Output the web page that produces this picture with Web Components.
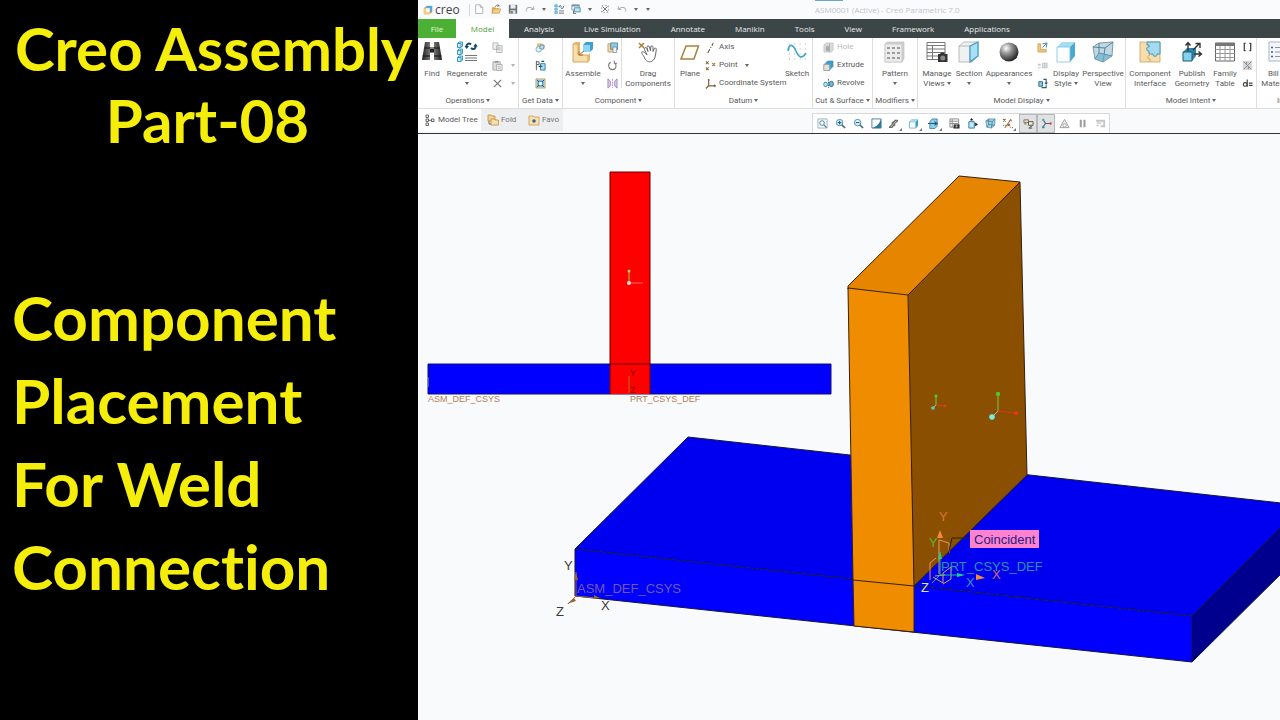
<!DOCTYPE html>
<html lang="en">
<head>
<meta charset="utf-8">
<title>Creo Assembly Part-08</title>
<style>
  html, body { margin: 0; height: 100%; }
  body { background: #000; font-family: "Open Sans", "Noto Sans", sans-serif; }
</style>
</head>
<body>
<lesson-page>
  <lesson-panel slot="panel">
    <span slot="title">Creo Assembly</span>
    <span slot="part">Part-08</span>
    <span slot="topic">Component Placement<br>For Weld Connection</span>
  </lesson-panel>
  <creo-window slot="window"></creo-window>
</lesson-page>

<script>
const define = (name, html, setup) => {
  const template = document.createElement('template');
  template.innerHTML = html;
  customElements.define(name, class extends HTMLElement {
    connectedCallback() {
      if (this.shadowRoot) return;
      const root = this.attachShadow({ mode: 'open' });
      root.append(template.content.cloneNode(true));
      if (setup) setup(this, root);
    }
  });
};

const makeIcon = (name, big) => {
  const icon = document.createElement('ui-icon');
  icon.setAttribute('name', name);
  if (big) icon.setAttribute('big', '');
  return icon;
};

/* Icons: [viewBox size, markup] */
const ICONS = {
  logo: [12, '<path d="M1 3.500L4 1.500 11 1.500 11 8.500 8 11 1 11z" fill="#e3a04c"/><path d="M4 1h7v7.500H4z" fill="#5aa7cf"/><path d="M1 4h7v7H1z" fill="#f3cd8d"/><path d="M4 4h4v4.500H4z" fill="#fff"/>'],
  new: [12, '<path d="M2 1h5.500L10.500 4v7.500H2z" fill="#fff" stroke="#a2a7ab"/><path d="M7.500 1v3h3" fill="none" stroke="#a2a7ab"/>'],
  open: [12, '<path d="M1 4h4l1 1h4v6H1z" fill="#e1ac55"/><path d="M1 11l2-5h9l-2 5z" fill="#f2cf8c" stroke="#bb8530" stroke-width=".6"/><path d="M5 3.500C6 1 8 1 9.500 2M8 .500l2 1.700-2.500.800" fill="none" stroke="#555" stroke-width=".8"/>'],
  save: [12, '<path d="M1 1h10v10.500H1z" fill="#6b7379"/><path d="M3 1h6v4.500H3z" fill="#e9edf0"/><path d="M3 7.500h6v4H3z" fill="#dfe3e6"/><path d="M4 8.500h1.500v3H4z" fill="#555"/>'],
  redo: [12, '<path d="M2 9C0 4 6 2.500 10 6M10.500 3v3.500H7" fill="none" stroke="#9a9ea1" stroke-width="1.100"/>'],
  undo: [12, '<path d="M10 9C12 4 6 2.500 2 6M1.500 3v3.500H5" fill="none" stroke="#9a9ea1" stroke-width="1.100"/>'],
  tree2: [12, '<path d="M1 1h3v2.500H1zM1 5h3v2.500H1zM1 9h3v2.500H1z" fill="#9ad7ee" stroke="#3793b8" stroke-width=".7"/><path d="M6 8h6M6 9.700h6M6 11.400h6" stroke="#777" stroke-width=".8"/><path d="M6 4C6 2 8 1.500 9 3M11.500 3C11.500 5 9.500 6 8 4.500" fill="none" stroke="#1c5479" stroke-width="1.200"/>'],
  windows: [12, '<path d="M1 1h9v6H1z" fill="#fff" stroke="#7b929f"/><path d="M1 1h9v2H1z" fill="#7b929f"/><path d="M4 4.500h7v5H4z" fill="#bfe4f2" stroke="#3f88a8"/><path d="M3 8v3.500h3" fill="none" stroke="#555"/>'],
  close: [12, '<path d="M2 2h8v8H2z" fill="none" stroke="#999" stroke-dasharray="2 2"/><path d="M3 3l6 6M9 3L3 9" stroke="#777" stroke-width="1.200"/>'],
  find: [22, '<defs><linearGradient id="b"><stop stop-color="#222"/><stop offset=".5" stop-color="#8b8b8b"/><stop offset="1" stop-color="#1d1d1d"/></linearGradient></defs><path d="M4 1h5v5h4V1h5l1 6 2 12h-8v-7H9v7H1L3 7z" fill="url(#b)"/><path d="M3.500 7h5.500M13 7h5.500M1.500 15H9M13 15h7.500" stroke="#111"/><path d="M9 8h4v3H9z" fill="#222"/>'],
  regen: [22, '<g fill="#c9ebf7" stroke="#3899bd"><path d="M1.500 2.500l1.500-1.500h3.500v4l-1.500 1.500H1.500zM1.500 9.500l1.500-1.500h3.500v4l-1.500 1.500H1.500zM1.500 16.500l1.500-1.500h3.500v4l-1.500 1.500H1.500z"/><path d="M1.500 2.500h3.500v4M1.500 9.500h3.500v4M1.500 16.500h3.500v4" fill="none"/></g><path d="M9 14.500h12M9 17h12M9 19.500h12" stroke="#777"/><path d="M10.500 6C10 3 13 1.500 15 3.500M19.500 4.500C20 8 17 9 15 7" fill="none" stroke="#12486d" stroke-width="2"/><path d="M8.500 5h4.500l-2.300 3zM17.300 5.500l2.200-3 2.300 3z" fill="#12486d"/>'],
  copy: [12, '<path d="M1 1h5.500v7H1zM5 4h6v7.500H5z" fill="#eee" stroke="#b3b5b7"/><path d="M6.500 6.500h3M6.500 8.500h3" stroke="#b3b5b7"/>'],
  paste: [12, '<path d="M1 2h8v9H1z" fill="#ddd" stroke="#aaa"/><path d="M3 1h4v2H3z" fill="#999"/><path d="M5 5h6v6.500H5z" fill="#f5f5f5" stroke="#aaa"/><path d="M6.500 7.500h3M6.500 9.500h3" stroke="#aaa"/>'],
  cross: [12, '<path d="M2 2l8 8M10 2l-8 8" stroke="#777" stroke-width="1.300"/>'],
  shapes: [12, '<path d="M2 1.500h6l2.500 2v4H2z" fill="#e9bb72"/><circle cx="4" cy="8" r="3" fill="#dff1f8" stroke="#6797ad" stroke-width=".8"/><path d="M6 3l4 1-1 4-4-1z" fill="#b9dff0" stroke="#4b8aa6" stroke-width=".8"/>'],
  merge: [12, '<path d="M1.500 1v10M1.500 2h3v3h-3" fill="none" stroke="#555"/><path d="M6 4h5v7H6z" fill="#a9ddf2" stroke="#2a7fa5"/><path d="M4 7h4M7 1.500h3" stroke="#174c68" stroke-width="1.300"/>'],
  shrink: [12, '<path d="M1 1h10v10H1z" fill="#a7dcef" stroke="#cfa65b"/><path d="M3.500 3.500h5v5h-5z" fill="#fff" stroke="#1f6c90"/><path d="M2 2l2.500 2.500M10 2L7.500 4.500M2 10l2.500-2.500M10 10L7.500 7.500" stroke="#164e6e"/>'],
  assemble: [22, '<path d="M1 3h5v11h10v7H1z" fill="#f9dfae" stroke="#c69345" stroke-width=".8"/><path d="M1 3l2-2h5l-2 2zM6 3l2-2v11l-2 2zM16 14l2-2v7l-2 2z" fill="#e2b66c"/><path d="M11 4l3-3h7v7l-3 3h-7z" fill="#3aa0ce"/><path d="M11 4h7v7h-7z" fill="#8fd5f0"/><path d="M7 14l5-4M7 10.500V14h4" fill="none" stroke="#a76f22"/>'],
  create: [12, '<path d="M1 2h8v9H1z" fill="#f1d39b" stroke="#b88a3f" stroke-width=".7"/><path d="M4 1h7.500v7H4z" fill="#8fc9e3" stroke="#377d9f" stroke-width=".8"/><path d="M6.500 5.500h4v6h-4z" fill="#eef2f4" stroke="#777" stroke-width=".7"/>'],
  cycle: [12, '<path d="M4 2.500C0 5 2 10.500 6 10.500S11 5.500 8.500 3.500M8 .500v3h3" fill="none" stroke="#777" stroke-width="1.100"/>'],
  mirror: [12, '<path d="M1 1c4 2 4 8 0 10zM11 1c-4 2-4 8 0 10z" fill="#d8cbe8" stroke="#9673b0" stroke-width=".8"/><path d="M6 1v10" stroke="#9673b0" stroke-width=".8" stroke-dasharray="2 1"/>'],
  drag: [22, '<path d="M2 2l5 5M7 2L2 7" stroke="#a77a2e" stroke-width="1.400"/><path d="M5 11c1.500-1 3.500 1 5 3L7.500 8.500c-.700-2 1.500-2.500 2.200-1L11 10.500 10 6.500c-.300-2 2-2.300 2.500-.5L13.500 10l.200-4c.3-1.700 2.300-1.500 2.300.2L16 10.500l1.200-2.800c.8-1.300 2.500-.5 2.100 1L18.500 14c-.5 3.500-1.500 5-4 6.500-3 1-5.500-.5-7-3.500C7 14.500 3.500 12.500 5 11z" fill="#fff" stroke="#686868"/>'],
  plane: [22, '<path d="M7 5h12.500L15 18H2z" fill="#fffdf5" stroke="#a58245" stroke-width="1.500"/>'],
  axis: [12, '<path d="M9 1L7.500 4M6.700 5.500l-.600 1M5.200 8L3 12" stroke="#66503a" stroke-width="1.100"/>'],
  point: [12, '<path d="M1 1.500l3 3M4 1.500l-3 3M8 3.500l3 3M11 3.500l-3 3M1 8l3 3M4 8l-3 3" stroke="#8f6b3a" stroke-width="1.100"/>'],
  csys: [12, '<path d="M4 1v7.500h8M4 8.500L1 11.500" fill="none" stroke="#806040" stroke-width="1.300"/><path d="M3 2h2M10.500 7v3" stroke="#806040"/>'],
  sketch: [22, '<path d="M3 3h17M3 8h17M3 13h17M3 18h17" stroke="#aaa" stroke-width="1" stroke-dasharray="1 4.300"/><path d="M2 10C3 2 7 3 10 10s6 8 10 2" fill="none" stroke="#3ba5cf" stroke-width="1.600"/>'],
  hole: [12, '<path d="M1 3l3-2h7v8l-2 2H1z" fill="#d9dadb" stroke="#b5b7b8" stroke-width=".7"/><ellipse cx="5" cy="7" rx="2" ry="3" fill="#a9abac"/><path d="M7 2v9" stroke="#aaa"/>'],
  extrude: [12, '<path d="M1 5l4-4h6v6l-4 4.500H1z" fill="#66b4d4" stroke="#6c8694" stroke-width=".6"/><path d="M1 5h6v6.500H1z" fill="#e5e2db" stroke="#8d8d8d" stroke-width=".6"/><path d="M5 1h6v6L8 9V4H3z" fill="#369cc6"/>'],
  revolve: [12, '<path d="M6 1v10" stroke="#555" stroke-dasharray="2 1"/><ellipse cx="2.800" cy="7" rx="2" ry="2.500" fill="#bfe5f3" stroke="#2c86ad"/><ellipse cx="9" cy="6.500" rx="2.300" ry="3" fill="#6fb8d6" stroke="#24779c"/>'],
  pattern: [22, '<path d="M1 3l2-2h17v17l-2 3H1z" fill="#d2d3d4" stroke="#b9babb" stroke-width=".6"/><path d="M1 3h17v18H1z" fill="#ececec" stroke="#bbb" stroke-width=".6"/><g fill="#9b9c9d"><path d="M3 6h3v2H3zM8 6h3v2H8zM13 6h3v2h-3zM3 11h3v2H3zM8 11h3v2H8zM13 11h3v2h-3zM3 16h3v2H3zM8 16h3v2H8zM13 16h3v2h-3z"/></g>'],
  manage: [22, '<path d="M1 1.500h18v17H1z" fill="#fff" stroke="#777"/><path d="M1 4.500h18M1 8h18M1 11.500h18M1 15h18M6.500 4.500v14" stroke="#777" fill="none"/><path d="M12 13h2l1-1.500h3l1 1.500h2.500v8H12z" fill="#333"/><circle cx="16.800" cy="17" r="2.500" fill="#888"/>'],
  section: [22, '<path d="M1 5l5-4h14v14l-6 6H1z" fill="#eff1f2" stroke="#a9adaf" stroke-width=".8"/><path d="M1 5h11v15" fill="none" stroke="#a9adaf" stroke-width=".8"/><path d="M12 5l8-4v14l-8 6z" fill="#a8e0f5" stroke="#3e9abf" stroke-width="1.200"/>'],
  appearances: [22, '<defs><radialGradient id="s" cx=".35" cy=".3" r=".7"><stop stop-color="#fff"/><stop offset=".4" stop-color="#999"/><stop offset="1" stop-color="#282828"/></radialGradient></defs><circle cx="11" cy="11" r="9.500" fill="url(#s)"/>'],
  annot: [12, '<path d="M1 2h3v6h6v3H1z" fill="#f0c97f" stroke="#bf8d3f" stroke-width=".7"/><path d="M6 2l5-1-1 5M10 2L6 6" fill="none" stroke="#377f9f"/>'],
  grayset: [12, '<path d="M1 4h3v2H1zM1 8h3v1H1zM5.500 3h6v6h-6z" fill="#c4c6c7"/><path d="M7 4v4M9.500 4v4" stroke="#eee"/>'],
  explode: [12, '<path d="M2 4h4v5H2z" fill="#8bcbe5" stroke="#24698c"/><path d="M7 1.500h3v4M5 10.500h5V8" fill="none" stroke="#315b72" stroke-width="1.200"/><path d="M8 5h4L10 7.500z" fill="#315b72"/>'],
  display: [22, '<path d="M2 6l5-5h13l-5 5z" fill="#a3dff4"/><path d="M15 6l5-5v14l-5 6z" fill="#4ba9d0"/><path d="M2 6h13v15H2z" fill="#fbfdfe" stroke="#83bfd8" stroke-width=".8"/>'],
  perspective: [22, '<path d="M1 6l6-4 14-1-1 14-9 6-8-3z" fill="#bfd9e4" stroke="#7d98a5"/><path d="M1 6l12 1-2 14M13 7l8-6M7 2v10l-4 6M7 12l13 3" fill="none" stroke="#58839a"/><path d="M7 12l13 3-9 6-8-3z" fill="#6fb1cb" opacity=".7"/>'],
  interface: [22, '<path d="M1 1h20v20H1z" fill="#f6dda9" stroke="#c8a564" stroke-width=".8"/><path d="M8 1h13v12h-3c1 3-5 3-4 0h-4v-3c-3 1-3-5 0-4V4H8z" fill="#a5daee" stroke="#4695b7"/><path d="M11 21v-3c-3 1-3-4 0-4" fill="none" stroke="#d1a75e"/>'],
  publish: [22, '<path d="M2 11l4-4h9v8l-4 5H2z" fill="#2f86ac"/><path d="M2 11h9v9H2z" fill="#85d0eb" stroke="#1e5875"/><path d="M7 10V2M4.500 4.500L7 1.500l2.500 3M12 9l6-6M14.500 2.500H19V7M13 13h7M17.500 10.500l3 2.500-3 2.500" fill="none" stroke="#333" stroke-width="1.400"/>'],
  family: [22, '<path d="M1.500 2h19v18h-19z" fill="#fff" stroke="#666"/><path d="M1.500 2h19v3h-19z" fill="#777"/><path d="M1.500 8.500h19M1.500 12.500h19M1.500 16.500h19M6 5v15M11 5v15M16 5v15" stroke="#999" fill="none"/>'],
  brackets: [12, '<path d="M4 1.500H2.500v8H4M8 1.500h1.500v8H8" fill="none" stroke="#444" stroke-width="1.400"/>'],
  percent: [12, '<path d="M1 1h10v10H1z" fill="#d3d5d6"/><path d="M2 2l8 8M10 2l-8 8M5 2v3M7 7v3" stroke="#888"/>'],
  deq: [12, '<circle cx="3.500" cy="7" r="2" fill="none" stroke="#444" stroke-width="1.300"/><path d="M5.700 1.500V9.500M7.500 5.500h4M7.500 8h4" stroke="#444" stroke-width="1.300"/>'],
  bill: [22, '<path d="M2 1h13l4 4v15H2z" fill="#f4f6fb" stroke="#a9b3c4"/><path d="M4 6.500h2M4 11h2M4 15.500h2" stroke="#3d5da0" stroke-width="1.500"/><path d="M8 6.500h8M8 11h8M8 15.500h8" stroke="#8792a8"/>'],
  tree: [12, '<path d="M2 1h2.500v2.500H2zM2 5h2.500v2.500H2zM2 9h2.500v2.500H2zM7.500 5H10v2.500H7.500z" fill="#fff" stroke="#666"/><path d="M4.500 6.300h3" stroke="#666"/>'],
  folders: [12, '<path d="M1 1h3l1 1h3v5H1z" fill="#f2d292" stroke="#c08e3c" stroke-width=".8"/><path d="M4 5h3l1 1h3.500v5H4z" fill="#f7dfae" stroke="#c08e3c" stroke-width=".8"/><path d="M2 7v3h2" fill="none" stroke="#777"/>'],
  favorite: [12, '<path d="M1 2h4l1 1h5v8H1z" fill="#f7dfae" stroke="#c89b50" stroke-width=".8"/><circle cx="6" cy="7" r="1.800" fill="#3b6488"/>'],
  refit: [12, '<path d="M1 1h10v10H1z" fill="#f2fafd" stroke="#78a3b8" stroke-width=".8"/><circle cx="5.500" cy="5.500" r="2.500" fill="#fff" stroke="#52798d"/><path d="M7.500 7.500L10.500 10.500" stroke="#52798d" stroke-width="1.300"/>'],
  zoomin: [12, '<circle cx="5" cy="5" r="3.500" fill="#e8f5fb" stroke="#4385a6"/><path d="M7.500 7.500l3.500 3.500" stroke="#3e6c84" stroke-width="1.600"/><path d="M3 5h4M5 3v4" stroke="#1c5f86" stroke-width="1.200"/>'],
  zoomout: [12, '<circle cx="5" cy="5" r="3.500" fill="#e8f5fb" stroke="#4385a6"/><path d="M7.500 7.500l3.500 3.500" stroke="#3e6c84" stroke-width="1.600"/><path d="M3 5h4" stroke="#1c5f86" stroke-width="1.200"/>'],
  repaint: [12, '<path d="M1 1h10v10H1z" fill="#fff" stroke="#477c95"/><path d="M11 1v10H1C7 9 9 6 11 1z" fill="#2d7796"/>'],
  shade: [12, '<path d="M1 11c0-4 3-2 3-5s3-1 3-4h4c0 4-3 2-3 5s-3 1-3 4z" fill="#666"/><path d="M3 10L9 3" stroke="#ccc"/>'],
  cube: [12, '<path d="M1.500 4l2.500-2.500h7v7L8.500 11h-7z" fill="#3f9dc4"/><path d="M1.500 4h7v7h-7z" fill="#f6fcfe" stroke="#5ba9c8" stroke-width=".8"/><path d="M1.500 4L4 1.500h7L8.500 4z" fill="#a9dff1"/>'],
  views: [12, '<path d="M2 4l2.500-3H10v8l-2.500 2.500H2z" fill="#8dcfe8" stroke="#266e92" stroke-width=".8"/><path d="M0 6h9M7 4l3 2-3 2" fill="none" stroke="#1e5674" stroke-width="1.100"/>'],
  viewmgr: [12, '<path d="M1 1h9.500v9H1z" fill="#fff" stroke="#888"/><path d="M1 3.500h9M1 6h9M3.500 1v9" stroke="#888"/><path d="M5 7h6.500v4.500H5z" fill="#333"/><circle cx="8.200" cy="9.200" r="1.200" fill="#aaa"/>'],
  rotate: [12, '<path d="M2 4h6v7H2z" fill="#bfe7f4" stroke="#2b7b9e"/><path d="M5 3V1M3.500 2.500L5 .500l1.500 2M9 5.500l2.500 1.500L9 8.500z" fill="#222" stroke="#222" stroke-width=".8"/>'],
  persp2: [12, '<path d="M1 3l3-2h7l-.500 7L7 11l-5-1z" fill="#a5d2e4" stroke="#4d8ba7" stroke-width=".8"/><path d="M1 3l7 1-1 7M8 4l3-3M4 1v6l6.500 1M4 7l-2 3" fill="none" stroke="#3b7896" stroke-width=".8"/>'],
  datums: [12, '<path d="M1 1l3 3M4 1L1 4M10 1L3 11M6 6l3 3M9 6L6 9" stroke="#93703b" stroke-width="1.100"/><path d="M1 8h3M8 3h3.500M9 10.500h3" stroke="#555" stroke-dasharray="1 1"/>'],
  notes: [12, '<path d="M1 2h5v3H1zM1 6.500h3" fill="#f3dca8" stroke="#666" stroke-width=".9"/><path d="M6 4h5v4H6z" fill="#f6e8c6" stroke="#444" stroke-width=".9"/><path d="M7 10.500l3-2M6 11h4" stroke="#444"/>'],
  spin: [12, '<path d="M2 1.500L5 6h6M5 6l-3 4" fill="none" stroke="#557" stroke-width="1.100"/><circle cx="2.500" cy="2" r="1.300" fill="#5a8"/><circle cx="10.500" cy="6" r="1.300" fill="#c54"/><circle cx="2.500" cy="10" r="1.300" fill="#489"/>'],
  simulate: [12, '<path d="M6 1.500L11 10.500H1z" fill="#f1f1f1" stroke="#9b9b9b"/><circle cx="6" cy="8" r="1.800" fill="#fff" stroke="#9b9b9b"/>'],
  pause: [12, '<path d="M3 2h2.300v8H3zM7 2h2.300v8H7z" fill="#9fa0a1"/>'],
  stop: [12, '<path d="M1 2h10v8H6V8h3V4H1z" fill="#c4c5c6"/><path d="M2 5.500h5M2 8h2" stroke="#aaa"/>'],
};

define('ui-icon', `
  <style>
    :host { display: block; flex: none; width: 12px; height: 12px; }
    :host([big]) { width: 22px; height: 22px; }
    svg { display: block; width: 100%; height: 100%; }
  </style>
  <svg aria-hidden="true"></svg>`,
  (el, root) => {
    const [size, markup] = ICONS[el.getAttribute('name')];
    const svg = root.querySelector('svg');
    svg.setAttribute('viewBox', `0 0 ${size} ${size}`);
    svg.innerHTML = markup;
  });

define('ui-caret', `
  <style>
    :host { display: inline-block; flex: none; vertical-align: middle;
      border: solid transparent; border-width: 3px 2px 0; border-top-color: #666; }
  </style>`);

/* Large ribbon command: icon above a one or two line label */
define('ribbon-command', `
  <style>
    :host { display: block; flex: none; width: var(--w, 40px); }
    button { display: flex; flex-direction: column; align-items: center; gap: 6px; width: 100%;
      height: 100%; margin: 0; padding: 3px 0 0; border: 0; background: none; color: #5a5a5a;
      font: 8px/10px Roboto, "Open Sans", sans-serif; white-space: nowrap; }
    span { display: block; text-align: center; }
    button.below span { display: flex; flex-direction: column; align-items: center; gap: 3px; }
    ui-caret { margin-left: 2px; }
    .below ui-caret { margin-left: 0; }
  </style>
  <button type="button"><span><slot></slot></span></button>`,
  (el, root) => {
    root.querySelector('button').prepend(makeIcon(el.getAttribute('icon'), true));
    const menu = el.getAttribute('menu');
    if (menu) root.querySelector('span').append(document.createElement('ui-caret'));
    if (menu === 'below') root.querySelector('button').classList.add('below');
  });

/* Small command: icon, optional label and drop-down mark */
define('small-command', `
  <style>
    :host { display: block; }
    button { display: flex; align-items: center; justify-content: center; gap: 2px; width: 100%; height: 18px;
      margin: 0; padding: 0; border: 0; background: none; color: #5a5a5a;
      font: 8px/10px Roboto, "Open Sans", sans-serif; white-space: nowrap; }
    :host([labelled]) button { justify-content: flex-start; }
    :host([disabled]) button { color: #bbb; }
    :host([menu]) ui-caret { margin-left: 5px; }
    :host([quiet]) ui-caret { opacity: .5; }
    ui-icon { width: 11px; height: 11px; }
    :host([labelled]) ui-icon { margin-right: 1px; }
  </style>
  <button type="button"><slot></slot></button>`,
  (el, root) => {
    const button = root.querySelector('button');
    button.prepend(makeIcon(el.getAttribute('icon')));
    if (!el.textContent) button.setAttribute('aria-label', el.getAttribute('icon'));
    if (el.hasAttribute('menu')) button.append(document.createElement('ui-caret'));
  });

define('command-stack', `
  <style>
    :host { display: flex; flex-direction: column; flex: none; width: var(--w, 14px); }
  </style><slot></slot>`);

define('ribbon-group', `
  <style>
    :host { display: flex; flex-direction: column; flex: none; box-sizing: border-box;
      width: var(--w); border-right: 1px solid #dcdedf; }
    .body { display: flex; height: 54px; padding-left: var(--pad, 0px); }
    button { margin: 2px 0 0; padding: 0; border: 0; background: none; color: #5a5a5a; height: 14px;
      font: 8px/14px Roboto, "Open Sans", sans-serif; white-space: nowrap; }
    ui-caret { margin-left: 2px; }
  </style>
  <div class="body"><slot></slot></div>
  <button type="button"></button>`,
  (el, root) => {
    root.querySelector('button').append(el.getAttribute('label'), document.createElement('ui-caret'));
  });

define('quick-access', `
  <style>
    :host { display: flex; align-items: center; height: 19px; background: #fafbfd; overflow: hidden; }
    .brand { display: flex; align-items: center; gap: 2px; width: 52px; padding-left: 5px;
      border-right: 1px solid #d5d7d9; color: #444; font: 400 12px/12px "Open Sans", sans-serif; box-sizing: border-box; }
    .tools { display: flex; align-items: center; }
    button { display: grid; place-items: center; width: 17px; height: 18px; margin: 0; padding: 0 0 1px; border: 0; background: none; }
    button.drop { width: 12px; }
    ui-icon { width: 10px; height: 10px; }
    h1 { margin: 0; flex: none; margin-left: auto; width: 465px; color: #c3c4c6; white-space: nowrap;
      background: linear-gradient(#6aa5cb, #6aa5cb) 0 0 / 28px 1px no-repeat;
      font: 400 8px/19px "Open Sans", "Noto Sans", sans-serif; }
  </style>
  <div class="brand"><ui-icon name="logo"></ui-icon><span>creo</span></div>
  <div class="tools"></div>
  <h1>ASM0001 (Active) - Creo Parametric 7.0</h1>`,
  (el, root) => {
    const tools = root.querySelector('.tools');
    for (const name of ['new', 'open', 'save', 'redo', '', 'tree2', 'windows', '', 'close', 'undo', '', 'more']) {
      const b = document.createElement('button');
      b.type = 'button';
      b.setAttribute('aria-label', name || 'menu');
      if (!name || name === 'more') {
        b.className = 'drop';
        b.append(document.createElement('ui-caret'));
      } else {
        b.append(makeIcon(name));
      }
      tools.append(b);
    }
  });

define('ribbon-tabs', `
  <style>
    :host { display: flex; height: 19px; background: #3c4647; overflow: hidden; }
    button { flex: none; margin: 0; padding: 0 15px; border: 0; background: none; color: #e8ebeb; white-space: nowrap;
      font: 8px/18px "Open Sans", "Noto Sans", sans-serif; }
    .file { width: 38px; padding: 0; background: #4cb034; color: #e4f7dc; }
    .active { width: 53px; padding: 0; background: #fff; color: #4c9c3c; }
  </style>
  <button type="button" class="file">File</button>
  <button type="button" class="active">Model</button>
  <button type="button">Analysis</button>
  <button type="button">Live Simulation</button>
  <button type="button">Annotate</button>
  <button type="button">Manikin</button>
  <button type="button">Tools</button>
  <button type="button">View</button>
  <button type="button">Framework</button>
  <button type="button">Applications</button>`);

define('command-ribbon', `
  <style>
    :host { display: flex; height: 71px; background: #fff; border-bottom: 1px solid #dcdedf; box-sizing: border-box; overflow: hidden; }
    .split { flex: none; width: 1px; height: 50px; background: #dcdedf; }
    .inset { padding-left: 4px; }
  </style>
  <ribbon-group label="Operations" style="--w:101px">
    <ribbon-command icon="find" style="--w:28px">Find</ribbon-command>
    <ribbon-command icon="regen" menu="below" style="--w:42px">Regenerate</ribbon-command>
    <command-stack style="--w:30px">
      <small-command class="inset" icon="copy" labelled></small-command>
      <small-command class="inset" icon="paste" labelled menu quiet></small-command>
      <small-command class="inset" icon="cross" labelled menu quiet></small-command>
    </command-stack>
  </ribbon-group>
  <ribbon-group label="Get Data" style="--w:44px">
    <command-stack style="--w:43px">
      <small-command icon="shapes"></small-command>
      <small-command icon="merge"></small-command>
      <small-command icon="shrink"></small-command>
    </command-stack>
  </ribbon-group>
  <ribbon-group label="Component" style="--w:112px">
    <ribbon-command icon="assemble" menu="below" style="--w:40px">Assemble</ribbon-command>
    <command-stack style="--w:18px">
      <small-command icon="create"></small-command>
      <small-command icon="cycle"></small-command>
      <small-command icon="mirror"></small-command>
    </command-stack>
    <div class="split"></div>
    <ribbon-command icon="drag" style="--w:52px">Drag<br>Components</ribbon-command>
  </ribbon-group>
  <ribbon-group label="Datum" style="--w:138px">
    <ribbon-command icon="plane" style="--w:30px">Plane</ribbon-command>
    <command-stack style="--w:78px">
      <small-command icon="axis" labelled>Axis</small-command>
      <small-command icon="point" labelled menu>Point</small-command>
      <small-command icon="csys" labelled>Coordinate System</small-command>
    </command-stack>
    <ribbon-command icon="sketch" style="--w:28px">Sketch</ribbon-command>
  </ribbon-group>
  <ribbon-group label="Cut &amp; Surface" style="--w:60px;--pad:10px">
    <command-stack style="--w:48px">
      <small-command icon="hole" labelled disabled>Hole</small-command>
      <small-command icon="extrude" labelled>Extrude</small-command>
      <small-command icon="revolve" labelled>Revolve</small-command>
    </command-stack>
  </ribbon-group>
  <ribbon-group label="Modifiers" style="--w:45px">
    <ribbon-command icon="pattern" menu="below" style="--w:44px">Pattern</ribbon-command>
  </ribbon-group>
  <ribbon-group label="Model Display" style="--w:208px">
    <ribbon-command icon="manage" menu="inline" style="--w:38px">Manage<br>Views</ribbon-command>
    <ribbon-command icon="section" menu="below" style="--w:26px">Section</ribbon-command>
    <ribbon-command icon="appearances" menu="below" style="--w:54px">Appearances</ribbon-command>
    <command-stack style="--w:12px">
      <small-command icon="annot"></small-command>
      <small-command icon="grayset"></small-command>
      <small-command icon="explode"></small-command>
    </command-stack>
    <ribbon-command icon="display" menu="inline" style="--w:36px">Display<br>Style</ribbon-command>
    <ribbon-command icon="perspective" style="--w:38px">Perspective<br>View</ribbon-command>
  </ribbon-group>
  <ribbon-group label="Model Intent" style="--w:131px">
    <ribbon-command icon="interface" style="--w:48px">Component<br>Interface</ribbon-command>
    <ribbon-command icon="publish" style="--w:36px">Publish<br>Geometry</ribbon-command>
    <ribbon-command icon="family" style="--w:30px">Family<br>Table</ribbon-command>
    <command-stack style="--w:14px">
      <small-command icon="brackets"></small-command>
      <small-command icon="percent"></small-command>
      <small-command icon="deq"></small-command>
    </command-stack>
  </ribbon-group>
  <ribbon-group label="Investigate" style="--w:86px">
    <ribbon-command icon="bill" style="--w:42px">Bill of<br>Materials</ribbon-command>
  </ribbon-group>`);

define('navigator-tabs', `
  <style>
    :host { display: flex; height: 22px; }
    button { display: flex; align-items: center; gap: 2px; box-sizing: border-box; flex: none; width: 41px; margin: 0; padding: 0 0 0 6px; border: 0;
      background: #eceeef; color: #777; white-space: nowrap;
      font: 8px/12px Roboto, "Open Sans", sans-serif; }
    button.active { width: 63px; background: #fff; color: #5a5a5a; }
  </style>
  <button type="button" class="active"><ui-icon name="tree"></ui-icon><span>Model Tree</span></button>
  <button type="button"><ui-icon name="folders"></ui-icon><span>Fold</span></button>
  <button type="button"><ui-icon name="favorite"></ui-icon><span>Favo</span></button>`);

define('graphics-toolbar', `
  <style>
    :host { display: flex; box-sizing: border-box; height: 20px; background: #fff; border: 1px solid #d6d8da; border-bottom: 0; }
    button { display: flex; align-items: center; justify-content: center; width: 18px; margin: 0; padding: 0; border: 0; background: none; }
    button.menu { width: 20px; }
    button.menu::after { content: ""; align-self: flex-end; border: solid transparent; border-width: 0 0 3px 3px; border-bottom-color: #777; margin-bottom: 2px; }
    button.on { background: #dfe1e3; box-shadow: inset 0 0 0 1px #b6b9bb; }
    ui-icon { width: 11px; height: 11px; }
  </style>`,
  (el, root) => {
    const items = ['refit', 'zoomin', 'zoomout', 'repaint', 'shade+', 'cube+', 'views+', 'viewmgr', 'rotate',
      'persp2', 'datums+', 'notes*', 'spin*', 'simulate', 'pause', 'stop'];
    for (const item of items) {
      const name = item.replace(/[+*]/, '');
      const b = document.createElement('button');
      b.type = 'button';
      b.setAttribute('aria-label', name);
      if (item.endsWith('+')) b.className = 'menu';
      if (item.endsWith('*')) b.className = 'on';
      b.append(makeIcon(name));
      root.append(b);
    }
  });

define('model-view', `
  <style>
    :host { display: block; flex: 1; min-height: 0; background: #f9fafc; overflow: hidden; }
    svg { display: block; width: 100%; height: 100%; font-family: "Liberation Sans", Arial, sans-serif; }
    .edge { stroke: #15153a; stroke-width: 1; fill: none; }
    .cs { font-size: 13px; }
    .csmall { font-size: 9px; }
  </style>
  <svg viewBox="418 134 862 586" preserveAspectRatio="xMinYMin meet" role="img" aria-label="Weld assembly model">
    <g>
      <path d="M428 364h403v30H428z" fill="#0000fe" stroke="#101070"/>
      <path d="M610 172h40v222h-40z" fill="#fe0000"/>
      <path d="M610 394V172h40v222M610 364h40" fill="none" stroke="#600" />
      <path d="M629 283V271" stroke="#9c3" fill="none"/><path d="M630 283h13" stroke="#f66"/>
      <circle cx="629" cy="271" r="1.500" fill="#ac4"/><circle cx="629" cy="283" r="2" fill="#cdd"/>
      <path d="M629 393v-17" stroke="#c60"/><path d="M428 387v-10" stroke="#997"/>
      <g class="csmall" fill="#b08058"><text x="428" y="402">ASM_DEF_CSYS</text><text x="630" y="402">PRT_CSYS_DEF</text></g>
      <g class="csmall" fill="#700000"><text x="630" y="376">Y</text><text x="630" y="393">Z</text></g>
    </g>
    <g>
      <path d="M688 437L1290 504V519L1192 616 575 549z" fill="#0000f0"/>
      <path d="M575 549L1192 616V662L575 596z" fill="#0000fe"/>
      <path d="M1192 616L1290 518V565L1192 662z" fill="#00008e"/>
      <path class="edge" d="M575 549L688 437 1290 504M575 549V596L1192 662 1290 565M575 549L1192 616V662M1192 616L1290 518"/>
    </g>
    <g>
      <path d="M848 286L959 176 1020 182 908 295 848 289z" fill="#e68600"/>
      <path d="M848 288L908 295 914 586V632L854 626 853 580z" fill="#ef8c00"/>
      <path d="M908 295L1020 182 1027 475 914 586z" fill="#8a4f00"/>
      <path d="M848 289V286L959 176 1020 182 908 295 848 288 853 580 854 626 914 632V586L908 295M1020 182L1027 475 914 586 853 580" fill="none" stroke="#332010"/>
    </g>
    <g fill="none">
      <path d="M936 405v-9" stroke="#7c3"/><path d="M936 405l9 1" stroke="#c42"/><path d="M936 405l-3 3" stroke="#7cc"/>
      <path d="M998 411v-17" stroke="#7c3"/><path d="M998 411l17 2" stroke="#d32"/><path d="M998 411l-6 6" stroke="#7cc"/>
    </g>
    <g><circle cx="936" cy="396" r="1.600" fill="#5c3"/><circle cx="945" cy="406" r="1.600" fill="#c42"/><circle cx="933" cy="408" r="1.800" fill="#6cb"/>
      <circle cx="998" cy="394" r="2.200" fill="#4c2"/><circle cx="1016" cy="413" r="2" fill="#e32"/><circle cx="992" cy="417" r="2.800" fill="#7ed"/></g>
    <g class="cs">
      <path d="M576 596V572M576 596L568 604M576 596l20 2" stroke="#963" fill="none"/>
      <path d="M574 580l2-8 2 8zM567 604l7-6 2 3zM594 595l6 3-6 1z" fill="#963"/>
      <g fill="#3c3c3c"><text x="564" y="570">Y</text><text x="556" y="616">Z</text><text x="601" y="610">X</text></g>
      <text x="577" y="593" fill="#7458a8">ASM_DEF_CSYS</text>
    </g>
    <g class="cs">
      <path d="M939 574V540l10 3v10M935 576l10-1M930 580v-17l6-5M933 577l10 6v-10l8-6v12l-8 5" fill="none" stroke="#e79a62"/>
      <path d="M948 555l4-17h18" fill="none" stroke="#222"/>
      <path d="M940 575V552M940 575h22M940 575l-8 8" fill="none" stroke="#2b9"/>
      <path d="M938 559l2-8 2 8zM957 573l8 2-8 2z" fill="#2c8"/>
      <path d="M937 538l3-8 3 8zM976 574l9 4-9 2z" fill="#f08a3c"/>
      <text x="939" y="521" fill="#d47a2c">Y</text><text x="929" y="547" fill="#5b2">Y</text>
      <text x="941" y="571" fill="#2a90b0">PRT_CSYS_DEF</text>
      <text x="966" y="587" fill="#3a90c8">X</text><text x="992" y="579" fill="#d06a6a">X</text>
      <text x="921" y="592" fill="#d8e88c">Z</text>
      <path d="M970 530h69v18h-69z" fill="#ff82d0"/><text x="974" y="544" fill="#2a2080">Coincident</text>
    </g>
  </svg>`);

define('creo-window', `
  <style>
    :host { display: flex; flex-direction: column; min-width: 0; min-height: 0; height: 100%; background: #f9fafc; overflow: hidden; }
    .bar { display: flex; justify-content: space-between; align-items: flex-start; height: 24px; flex: none;
      background: #f9fafc; border-bottom: 1px solid #333; }
    .bar graphics-toolbar { margin: 4px 170px 0 0; }
    .bar navigator-tabs { flex: none; }
    quick-access, ribbon-tabs, command-ribbon { flex: none; }
  </style>
  <quick-access></quick-access>
  <ribbon-tabs></ribbon-tabs>
  <command-ribbon></command-ribbon>
  <div class="bar"><navigator-tabs></navigator-tabs><graphics-toolbar></graphics-toolbar></div>
  <model-view></model-view>`);

define('lesson-panel', `
  <style>
    :host { display: block; min-width: 0; background: #000; color: #f5ee0a; white-space: nowrap;
      font: 700 60px/72px Lato, "Open Sans", sans-serif; font-variant-ligatures: none; }
    h2, p { margin: 0; font: inherit; }
    h2 { padding: 12px 0 0 15px; }
    .part { display: block; padding-right: 18px; text-align: center; }
    p { padding: 120px 60px 0 12px; font-size: 62px; line-height: 83px; white-space: normal; }
  </style>
  <h2><slot name="title"></slot><span class="part"><slot name="part"></slot></span></h2>
  <p><slot name="topic"></slot></p>`);

define('lesson-page', `
  <style>
    :host { display: grid; grid-template-columns: minmax(0, 209fr) minmax(0, 431fr); height: 100vh; overflow: hidden; }
    ::slotted(*) { min-height: 0; }
  </style>
  <slot name="panel"></slot><slot name="window"></slot>`);
</script>
</body>
</html>
